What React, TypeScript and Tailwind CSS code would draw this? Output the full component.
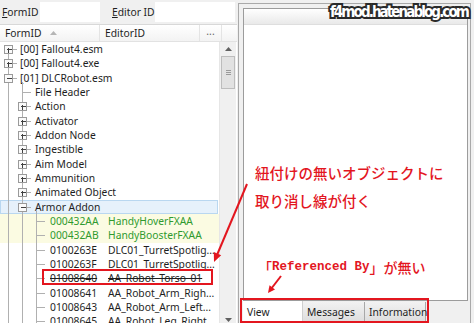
import React from "react";

type Row = {
  level: number;
  kind: "plus" | "minus" | "leaf";
  text?: string;
  id?: string;
  ed?: string;
  variant?: "sel" | "green" | "strike";
};

const rows: Row[] = [
  { level: 0, kind: "plus", text: "[00] Fallout4.esm" },
  { level: 0, kind: "plus", text: "[00] Fallout4.exe" },
  { level: 0, kind: "minus", text: "[01] DLCRobot.esm" },
  { level: 1, kind: "leaf", text: "File Header" },
  { level: 1, kind: "plus", text: "Action" },
  { level: 1, kind: "plus", text: "Activator" },
  { level: 1, kind: "plus", text: "Addon Node" },
  { level: 1, kind: "plus", text: "Ingestible" },
  { level: 1, kind: "plus", text: "Aim Model" },
  { level: 1, kind: "plus", text: "Ammunition" },
  { level: 1, kind: "plus", text: "Animated Object" },
  { level: 1, kind: "minus", text: "Armor Addon", variant: "sel" },
  { level: 2, kind: "leaf", id: "000432AA", ed: "HandyHoverFXAA", variant: "green" },
  { level: 2, kind: "leaf", id: "000432AB", ed: "HandyBoosterFXAA", variant: "green" },
  { level: 2, kind: "leaf", id: "0100263E", ed: "DLC01_TurretSpotlig..." },
  { level: 2, kind: "leaf", id: "0100263F", ed: "DLC01_TurretSpotlig..." },
  { level: 2, kind: "leaf", id: "01008640", ed: "AA_Robot_Torso_01", variant: "strike" },
  { level: 2, kind: "leaf", id: "01008641", ed: "AA_Robot_Arm_Righ..." },
  { level: 2, kind: "leaf", id: "01008643", ed: "AA_Robot_Arm_Left..." },
  { level: 2, kind: "leaf", id: "01008645", ed: "AA_Robot_Leg_Right..." },
];

const RH = 14.33;
const cy = (i: number) => i * RH + RH / 2;

function TreeLines() {
  const H = 300;
  const boxX = [4, 18, 32];
  return (
    <svg className="absolute left-0 top-0 pointer-events-none" width="220" height={H}>
      <g stroke="#b0b0b0" strokeWidth="1" shapeRendering="crispEdges">
        <line x1="8.5" y1={cy(0)} x2="8.5" y2={H} />
        <line x1="22.5" y1={cy(2) + 4} x2="22.5" y2={H} />
        <line x1="36.5" y1={cy(11) + 4} x2="36.5" y2={H} />
        {rows.map((r, i) => {
          const y = Math.round(cy(i)) + 0.5;
          const x0 = boxX[r.level] + 4;
          return <line key={i} x1={x0} y1={y} x2={x0 + 9} y2={y} />;
        })}
      </g>
      {rows.map((r, i) => {
        if (r.kind === "leaf") return null;
        const x = boxX[r.level] + 0.5;
        const y = Math.round(cy(i)) - 3.5;
        return (
          <g key={"b" + i} shapeRendering="crispEdges">
            <rect x={x} y={y} width="8" height="8" fill="#fafafa" stroke="#9a9a9a" />
            <line x1={x + 2} y1={y + 4} x2={x + 7} y2={y + 4} stroke="#404040" />
            {r.kind === "plus" && <line x1={x + 4} y1={y + 2} x2={x + 4} y2={y + 7} stroke="#404040" />}
          </g>
        );
      })}
    </svg>
  );
}

function TreeRow({ r }: { r: Row }) {
  const bg =
    r.variant === "sel"
      ? "bg-[#e6f1fb] border border-[#b9d7f0]"
      : r.variant === "green"
      ? "bg-[#fbfbe2]"
      : "";
  const color = r.variant === "green" ? "text-[#2f9a2f]" : "text-[#1e1e1e]";
  const pad = r.level === 0 ? "pl-[20px]" : r.level === 1 ? "pl-[35px]" : "pl-[50px]";
  return (
    <div className={`h-[14.33px] flex items-center whitespace-nowrap ${bg} ${color} ${pad} ${r.variant === "sel" ? "mr-[1px]" : ""}`}>
      {r.level < 2 ? (
        <span className={r.variant === "sel" ? "-ml-[1px]" : ""}>{r.text}</span>
      ) : (
        <>
          <span className={`w-[58px] ${r.variant === "strike" ? "line-through" : ""}`}>{r.id}</span>
          <span className={r.variant === "strike" ? "line-through" : ""}>{r.ed}</span>
        </>
      )}
    </div>
  );
}

export default function App() {
  return (
    <div className="relative w-[474px] h-[323px] overflow-hidden bg-[#f0f0f0] text-[10.3px] leading-none text-[#1e1e1e] font-['Noto_Sans',sans-serif] flex">
      {/* Left column */}
      <div className="w-[237px] flex flex-col">
        <div className="h-[24px] flex items-center">
          <span className="pl-[2px] w-[40px]">
            <span className="underline">F</span>ormID
          </span>
          <div className="w-[60px] h-[20px] bg-white" />
          <span className="ml-[12px] w-[43px]">
            <span className="underline">E</span>ditor ID
          </span>
          <div className="w-[80px] h-[20px] bg-white" />
        </div>
        <div className="flex-1 flex flex-col bg-white border-t border-[#d8d8d8] overflow-hidden">
          <div className="h-[17px] flex items-stretch bg-gradient-to-b from-white to-[#f3f3f3] border-b border-[#e2e2e2] shrink-0">
            <div className="w-[100px] flex items-center pl-[5px] border-r border-[#e4e4e4]">
              FormID
              <svg className="ml-[9px]" width="7" height="4" viewBox="0 0 7 4">
                <polygon points="0,4 3.5,0 7,4" fill="#b5b5b5" />
              </svg>
            </div>
            <div className="w-[100px] flex items-center pl-[5px] border-r border-[#e4e4e4]">EditorID</div>
            <div className="w-[22px] flex items-center justify-center border-r border-[#e4e4e4] text-[#666] pb-[3px]">...</div>
            <div className="flex-1" />
          </div>
          <div className="flex-1 flex">
            <div className="relative w-[220px] border-r border-[#e6e6e6] overflow-hidden">
              {rows.map((r, i) => (
                <TreeRow key={i} r={r} />
              ))}
              <TreeLines />
            </div>
            <div className="w-[16px] flex flex-col bg-[#f0f0f0]">
              <div className="h-[14px] flex items-center justify-center">
                <svg width="7" height="4" viewBox="0 0 7 4">
                  <polygon points="0,4 3.5,0 7,4" fill="#606060" />
                </svg>
              </div>
              <div className="mx-[1px] h-[33px] bg-[#e2e2e2] border border-[#bdbdbd] flex flex-col items-center justify-center gap-[1px]">
                <div className="w-[5px] h-px bg-[#9a9a9a]" />
                <div className="w-[5px] h-px bg-[#9a9a9a]" />
                <div className="w-[5px] h-px bg-[#9a9a9a]" />
              </div>
              <div className="flex-1" />
              <div className="h-[16px] flex items-center justify-center pb-[1px]">
                <svg width="7" height="4" viewBox="0 0 7 4">
                  <polygon points="0,0 3.5,4 7,0" fill="#606060" />
                </svg>
              </div>
            </div>
          </div>
        </div>
      </div>

      {/* Right panel */}
      <div className="ml-[1px] mt-[3px] w-[233px] border-l border-t border-r border-[#a9a9a9] flex flex-col">
        <div className="flex-1 mt-[4px] ml-[4px] mr-[2px] border border-[#9c9c9c] bg-white flex flex-col">
          <div className="h-[16px] bg-gradient-to-b from-white to-[#e9e9e9] border-b border-[#dedede]" />
          <div className="flex-1" />
        </div>
        <div className="h-[22px] flex items-stretch pl-[4px]">
          <div className="w-[60px] bg-white flex items-center pl-[4px] border-r border-[#cfcfcf]">View</div>
          <div className="w-[62px] bg-gradient-to-b from-[#f2f2f2] to-[#dcdcdc] flex items-center pl-[4px] border-r border-[#a8a8a8] mt-[1px]">Messages</div>
          <div className="w-[61px] bg-gradient-to-b from-[#f2f2f2] to-[#dcdcdc] flex items-center pl-[4px] border-r border-[#a8a8a8] mt-[1px]">Information</div>
          <div className="flex-1" />
        </div>
      </div>

      {/* Watermark */}
      <div className="absolute right-[6px] top-[4px] text-[15px] font-bold text-white font-['DejaVu_Sans_Condensed','DejaVu_Sans',sans-serif] [-webkit-text-stroke:4px_#2a2a2a] [paint-order:stroke_fill] tracking-[-1.9px] leading-[17px] whitespace-nowrap">
        f4mod.hatenablog.com
      </div>

      {/* Annotations */}
      <div className="absolute left-[255px] top-[165px] text-[14.5px] leading-[16px] font-medium text-[#e3161f] font-['Noto_Sans_CJK_JP',sans-serif] whitespace-nowrap">
        紐付けの無いオブジェクトに
      </div>
      <div className="absolute left-[255px] top-[193px] text-[14.5px] leading-[16px] font-medium text-[#e3161f] font-['Noto_Sans_CJK_JP',sans-serif] whitespace-nowrap">
        取り消し線が付く
      </div>
      <div className="absolute left-[258px] top-[259px] text-[14px] leading-[16px] font-medium text-[#e3161f] font-['Noto_Sans_CJK_JP',sans-serif] whitespace-nowrap flex items-center">
        <span>「</span>
        <span className="font-['Liberation_Mono',monospace] font-bold text-[12.5px]">Referenced By</span>
        <span>」が無い</span>
      </div>

      <div className="absolute left-[42px] top-[269px] w-[171px] h-[16px] border-2 border-[#e3161f]" />
      <div className="absolute left-[240px] top-[298px] w-[189px] h-[25px] border-2 border-[#e3161f]" />

      <svg className="absolute left-0 top-0 pointer-events-none" width="474" height="323">
        <line x1="247" y1="184" x2="217" y2="255" stroke="#e3161f" strokeWidth="2" />
        <polygon points="214,262 221.2,255.3 213.8,252.1" fill="#e3161f" />
        <line x1="281" y1="276" x2="271" y2="289" stroke="#e3161f" strokeWidth="2" />
        <polygon points="268,293 275,289.6 269.5,285.3" fill="#e3161f" />
      </svg>
    </div>
  );
}
